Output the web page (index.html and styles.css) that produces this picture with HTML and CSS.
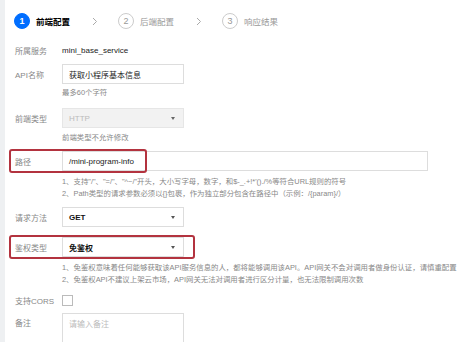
FILE: index.html
```html
<!DOCTYPE html>
<html lang="zh-CN">
<head>
<meta charset="utf-8">
<title>前端配置</title>
<link rel="stylesheet" href="styles.css">
</head>
<body>
<div class="page">
  <div class="steps">
    <div class="step active"><span class="num">1</span><span class="title">前端配置</span></div>
    <span class="chev"><svg width="6" height="9" viewBox="0 0 6 9"><path d="M1 1l3.5 3.5L1 8" fill="none" stroke="#aaa" stroke-width="1"/></svg></span>
    <div class="step"><span class="num">2</span><span class="title">后端配置</span></div>
    <span class="chev"><svg width="6" height="9" viewBox="0 0 6 9"><path d="M1 1l3.5 3.5L1 8" fill="none" stroke="#aaa" stroke-width="1"/></svg></span>
    <div class="step"><span class="num">3</span><span class="title">响应结果</span></div>
  </div>

  <div class="form">
    <div class="field f-service">
      <span class="label">所属服务</span>
      <span class="value">mini_base_service</span>
    </div>

    <div class="field f-name">
      <span class="label">API名称</span>
      <div class="input">获取小程序基本信息</div>
    </div>
    <div class="hint h1">最多60个字符</div>

    <div class="field f-type">
      <span class="label">前端类型</span>
      <div class="input select disabled">HTTP<span class="arrow"></span></div>
    </div>
    <div class="hint h2">前端类型不允许修改</div>

    <div class="field f-path marked">
      <span class="label">路径</span>
      <div class="input wide">/mini-program-info</div>
      <span class="mark mark-path"></span>
    </div>
    <div class="hint help">
      <div>1、支持"/"、"=/"、"^~/"开头，大小写字母，数字，和$-_.+!*'()./%等符合URL规则的符号</div>
      <div>2、Path类型的请求参数必须以{}包裹，作为独立部分包含在路径中（示例：/{param}/）</div>
    </div>

    <div class="field f-method">
      <span class="label">请求方法</span>
      <div class="input select strong">GET<span class="arrow"></span></div>
    </div>

    <div class="field f-auth marked">
      <span class="label">鉴权类型</span>
      <div class="input select strong">免鉴权<span class="arrow"></span></div>
      <span class="mark mark-auth"></span>
    </div>
    <div class="hint help">
      <div>1、免鉴权意味着任何能够获取该API服务信息的人，都将能够调用该API。API网关不会对调用者做身份认证，请慎重配置</div>
      <div>2、免鉴权API不建议上架云市场，API网关无法对调用者进行区分计量，也无法限制调用次数</div>
    </div>

    <div class="field f-cors">
      <span class="label">支持CORS</span>
      <span class="checkbox"></span>
    </div>

    <div class="field f-note">
      <span class="label">备注</span>
      <div class="textarea">请输入备注</div>
    </div>
  </div>
</div>
</body>
</html>
```

FILE: styles.css
```css
* { box-sizing: border-box; }
html, body { margin: 0; padding: 0; background: #fff; }
body {
  font-family: "Liberation Sans", "Noto Sans CJK SC", sans-serif;
  font-size: 8px;
  color: #333;
  width: 474px;
  height: 342px;
  overflow: hidden;
}
.page {
  border-left: 5px solid #eef0f2;
  height: 342px;
}

/* steps */
.steps {
  display: flex;
  align-items: center;
  padding: 13px 0 0 9px;
  height: 29px;
}
.step {
  display: flex;
  align-items: center;
  gap: 6px;
  width: 70px;
}
.num {
  width: 16px;
  height: 16px;
  border-radius: 50%;
  border: 1px solid #ccc;
  color: #999;
  font-size: 9px;
  display: flex;
  align-items: center;
  justify-content: center;
  flex: none;
}
.title {
  font-size: 8.5px;
  color: #999;
  white-space: nowrap;
}
.step.active .num {
  background: #006eff;
  border-color: #006eff;
  color: #fff;
  font-weight: bold;
}
.step.active .title {
  color: #000;
  font-weight: bold;
}
.chev {
  display: flex;
  width: 6px;
  margin: 0 20px 0 8px;
}

/* form */
.form {
  padding-left: 10px;
  display: flex;
  flex-direction: column;
}
.field {
  display: flex;
  align-items: center;
  min-height: 20px;
  position: relative;
}
.label {
  width: 47px;
  flex: none;
  color: #888;
  white-space: nowrap;
}
.value { color: #222; }
.input {
  width: 122px;
  height: 20px;
  border: 1px solid #ddd;
  background: #fff;
  padding: 0 6px;
  display: flex;
  align-items: center;
  color: #222;
  position: relative;
  white-space: nowrap;
}
.input.wide { width: 366px; }
.select.disabled {
  background: #f2f2f2;
  border-color: #e6e6e6;
  color: #bbb;
}
.select.strong { font-weight: bold; color: #111; }
.arrow {
  position: absolute;
  right: 8px;
  top: 8px;
  width: 0;
  height: 0;
  border-left: 2.5px solid transparent;
  border-right: 2.5px solid transparent;
  border-top: 3px solid #555;
}
.select.disabled .arrow { border-top-color: #666; }

.hint {
  margin-left: 47px;
  color: #888;
  font-size: 7.4px;
  line-height: 12px;
  white-space: nowrap;
}

.f-service { margin-top: 11px; }
.f-name { margin-top: 4px; }
.h1 { margin-top: 3px; }
.f-type { margin-top: 9px; }
.h2 { margin-top: 4px; }
.f-path { margin-top: 7px; }
.help { margin-top: 5px; }
.f-method { margin-top: 7px; }
.f-auth { margin-top: 10px; }
.f-cors { margin-top: 4px; }
.f-note { margin-top: 3px; align-items: flex-start; }
.f-note .label { padding-top: 4px; }

.checkbox {
  width: 11px;
  height: 11px;
  border: 1px solid #bbb;
  background: #fff;
}
.textarea {
  width: 122px;
  height: 40px;
  border: 1px solid #ddd;
  padding: 4px 6px;
  color: #bbb;
}

/* red annotation boxes */
.mark {
  position: absolute;
  border: 2px solid #b3333f;
  border-radius: 3px;
  pointer-events: none;
}
.mark-path {
  left: -6px;
  top: -2px;
  width: 138px;
  height: 24px;
}
.mark-auth {
  left: -6px;
  top: -2px;
  width: 186px;
  height: 24px;
}
```
